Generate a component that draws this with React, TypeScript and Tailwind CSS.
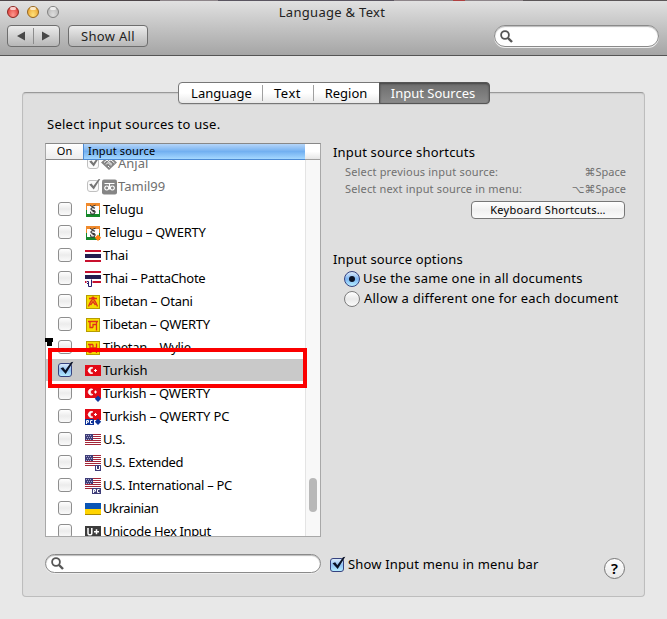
import type { FC, ReactNode } from "react";
import clsx from "clsx";

type IconName =
  | "anjal"
  | "tamil99"
  | "telugu"
  | "teluguQwerty"
  | "thai"
  | "thaiPatta"
  | "tibetanOtani"
  | "tibetanQwerty"
  | "tibetanWylie"
  | "turkish"
  | "turkishQwerty"
  | "turkishPc"
  | "us"
  | "usExtended"
  | "usPc"
  | "ukrainian"
  | "unicode";

type Source = {
  label: string;
  icon: IconName;
  tracking?: string;
  nested?: boolean;
  checked?: boolean;
};

const sources: Source[] = [
  { label: "Anjal", icon: "anjal", nested: true, checked: true },
  { label: "Tamil99", icon: "tamil99", nested: true, checked: true },
  { label: "Telugu", icon: "telugu", tracking: "tracking-[-0.1px]" },
  { label: "Telugu – QWERTY", icon: "teluguQwerty", tracking: "tracking-[-0.25px]" },
  { label: "Thai", icon: "thai", tracking: "tracking-[-0.2px]" },
  { label: "Thai – PattaChote", icon: "thaiPatta", tracking: "tracking-[-0.28px]" },
  { label: "Tibetan – Otani", icon: "tibetanOtani", tracking: "tracking-[-0.2px]" },
  { label: "Tibetan – QWERTY", icon: "tibetanQwerty", tracking: "tracking-[-0.28px]" },
  { label: "Tibetan – Wylie", icon: "tibetanWylie", tracking: "tracking-[-0.28px]" },
  { label: "Turkish", icon: "turkish", checked: true },
  { label: "Turkish – QWERTY", icon: "turkishQwerty", tracking: "tracking-[-0.18px]" },
  { label: "Turkish – QWERTY PC", icon: "turkishPc", tracking: "tracking-[-0.16px]" },
  { label: "U.S.", icon: "us", tracking: "tracking-[-0.25px]" },
  { label: "U.S. Extended", icon: "usExtended", tracking: "tracking-[-0.3px]" },
  { label: "U.S. International – PC", icon: "usPc", tracking: "tracking-[-0.3px]" },
  { label: "Ukrainian", icon: "ukrainian", tracking: "tracking-[-0.4px]" },
  { label: "Unicode Hex Input", icon: "unicode", tracking: "tracking-[-0.35px]" },
];

const UsFlag: FC<{ y: number }> = ({ y }) => (
  <g transform={`translate(0 ${y})`}>
    <rect width="16" height="11" fill="#fff" />
    {[0, 2, 4, 6, 8, 10].map((s) => (
      <rect key={s} y={s} width="16" height="1" fill="#a32638" />
    ))}
    <rect width="8" height="6" fill="#3f3d78" />
    {[0, 2, 4].map((r) =>
      [1, 3, 5].map((c) => (
        <rect key={`${r}-${c}`} x={r === 2 ? c + 1 : c} y={r + 1} width="1" height="1" fill="#a9a9cf" />
      )),
    )}
  </g>
);

const ThaiFlag: FC<{ y: number }> = ({ y }) => (
  <g transform={`translate(0 ${y})`}>
    <rect width="16" height="12" fill="#c8102e" />
    <rect y="2" width="16" height="8" fill="#fff" />
    <rect y="4" width="16" height="4" fill="#241d4f" />
  </g>
);

const TurkishFlag: FC<{ y: number; h: number }> = ({ y, h }) => (
  <g transform={`translate(0 ${y})`}>
    <rect width="16" height={h} fill="#e30a17" />
    <path
      d={`M8 ${h / 2 - 2.6}A3.1 3.1 0 1 0 8 ${h / 2 + 2.6}A2.5 2.5 0 1 1 8 ${h / 2 - 2.6}Z`}
      fill="#fff"
      stroke="#fff"
      strokeWidth=".7"
    />
    <path d={`M10.5 ${h / 2 - 1.6}v3.2M9 ${h / 2}h3`} stroke="#fff" strokeWidth="1.1" />
  </g>
);

const TeluguTile: FC = () => (
  <g>
    <rect x="1" y="1" width="14" height="7" fill="#f08a2c" />
    <rect x="1" y="8" width="14" height="7" fill="#15882a" />
    <rect x="2" y="4" width="12" height="8" fill="#fff" />
    <path d="M5 3.4l2 1.200 3.500-1.400" fill="none" stroke="#333" strokeWidth="1" />
    <path
      d="M10 6.200C8 5 5.500 6 6 7.500s3.500.3 4 1.900c.4 1.500-1 3-2.800 2.700-1.700-.2-2-1.600-1.200-2.400M7.500 9.600h1.800"
      fill="none"
      stroke="#333"
      strokeWidth="1.1"
    />
  </g>
);

const TibetanTile: FC<{ d: string }> = ({ d }) => (
  <g>
    <rect x="1.5" y="1.5" width="13" height="13" fill="#f5dc00" stroke="#b79d00" />
    <path d={d} fill="none" stroke="#e0301a" strokeWidth="1.3" />
  </g>
);

const Badge: FC<{ x: number; w: number; color: string; d: string }> = ({ x, w, color, d }) => (
  <g transform={`translate(${x} 10)`}>
    <rect width={w} height="6" fill={color} />
    <path d={d} fill="none" stroke="#fff" strokeWidth="1" />
  </g>
);

const PC_STROKES = "M1.500 5V1.500h2v1.700h-2M7.500 1.500h-2v3h2";

const iconDrawings: Record<IconName, ReactNode> = {
  anjal: (
    <g>
      <path d="M8 3.500L10.500 1.500 16 6.500 8 14 0 6.500 5.500 1.500Z" fill="#858585" />
      <path
        d="M3 6.500l3-2.500 5 4.500M5 8.500l2-2 3 3M8 4.500l2-.5 3.500 3M7 10l1.500 1.500"
        fill="none"
        stroke="#fff"
        strokeWidth="1"
      />
    </g>
  ),
  tamil99: (
    <g>
      <rect x="1" y="0.5" width="15" height="15" rx="2" fill="#858585" />
      <path
        d="M3.500 4.500h10M8.500 4.500v6M5.700 7a2 2 0 1 0 .1 0M11.300 7a2 2 0 1 0 .1 0"
        fill="none"
        stroke="#fff"
        strokeWidth="1.2"
      />
    </g>
  ),
  telugu: <TeluguTile />,
  teluguQwerty: (
    <g>
      <TeluguTile />
      <path d="M13 9.500l3.200 3.200-3.200 3.200-3.200-3.200z" fill="#ff7f11" />
    </g>
  ),
  thai: <ThaiFlag y={2} />,
  thaiPatta: (
    <g>
      <ThaiFlag y={0} />
      <rect x="1.5" y="10" width="6" height="6" fill="#fff" />
      <path d="M2 10.500h1.500v5h3V8.500M2 12.500h1.500" fill="none" stroke="#241d6f" strokeWidth="1" />
    </g>
  ),
  tibetanOtani: (
    <TibetanTile d="M4 4.500h2L8 3l2 1.500h2M8 3c0 3-1.500 3-2.800 5.500L3.500 12.500M8 3c0 3 1.500 3 2.800 5.500l1.700 4M5.500 11L8 7.500l2.500 3.500" />
  ),
  tibetanQwerty: <TibetanTile d="M3 4.500h10M11.500 4.500v9M5 5v5.500h3M8 10.500V7.500h3" />,
  tibetanWylie: <TibetanTile d="M3 4.500h5M11.500 3.500v9.500M5 4.500v3.500h6M4 9.500c2-1 3 0 3 1.500s-2 2-3.500 1M8 8V4.500" />,
  turkish: <TurkishFlag y={2} h={11} />,
  turkishQwerty: (
    <g>
      <TurkishFlag y={0} h={12} />
      <path d="M13 9.500l3.200 3.200-3.200 3.200-3.200-3.200z" fill="#1238a0" />
    </g>
  ),
  turkishPc: (
    <g>
      <TurkishFlag y={0} h={11} />
      <Badge x={0} w={9} color="#0c3196" d={PC_STROKES} />
      <path d="M13 9.500l3.200 3.200-3.200 3.200-3.200-3.200z" fill="#0c3196" />
    </g>
  ),
  us: <UsFlag y={2} />,
  usExtended: (
    <g>
      <UsFlag y={0} />
      <Badge x={10} w={6} color="#3f3d78" d="M1.500 1v3.500h3V1" />
    </g>
  ),
  usPc: (
    <g>
      <UsFlag y={0} />
      <Badge x={7} w={9} color="#3f3d78" d={PC_STROKES} />
    </g>
  ),
  ukrainian: (
    <g>
      <rect y="2" width="16" height="6" fill="#0b55b5" />
      <rect y="8" width="16" height="6" fill="#ffd400" />
      <path d="M0 13.500h16" stroke="#a88700" />
    </g>
  ),
  unicode: (
    <g>
      <rect y="2" width="16" height="12" fill="#3c3c3c" />
      <path
        d="M3 4v5.200q0 1.600 1.900 1.600T6.800 9.200V4M9 7.800h5M11.500 5.300v5"
        fill="none"
        stroke="#fff"
        strokeWidth="1.5"
      />
    </g>
  ),
};

const SourceIcon: FC<{ name: IconName }> = ({ name }) => (
  <svg viewBox="0 0 16 16" className="mt-1 size-4 shrink-0 overflow-visible">
    {iconDrawings[name]}
  </svg>
);

const Checkbox: FC<{ checked?: boolean }> = ({ checked }) => (
  <span
    className={clsx(
      "relative block size-3.5 shrink-0 rounded-[3px] border",
      checked
        ? "border-[#36427f] bg-linear-to-b from-[#dcebfa] via-[#8fc0f3] to-[#b5ecff]"
        : "border-[#8e8e8e] bg-linear-to-b from-white via-[#ececec] to-[#fafafa]",
    )}
  >
    {checked && (
      <svg viewBox="0 0 16 16" className="absolute -top-[3px] -left-px size-4">
        <path d="M2.500 7.300L5.200 6.200 7.300 9.200 13 1.200 15.300 .8 7.700 13Z" fill="#0a1226" />
      </svg>
    )}
  </span>
);

const DimCheckbox: FC = () => (
  <span className="relative mt-[5px] block size-3 shrink-0 rounded-[3px] border border-[#c0c0c0] bg-[#fafafa]">
    <svg viewBox="0 0 16 16" className="absolute -top-[3px] -left-px size-3.5">
      <path d="M2.500 7.300L5.200 6.200 7.300 9.200 13 1.500 15.200 1.200 7.700 13Z" fill="#757575" />
    </svg>
  </span>
);

const SourceRow: FC<{ source: Source }> = ({ source }) => {
  if (source.nested) {
    return (
      <li className="flex h-[23px] pl-[41px] text-[#6f6f6f]">
        <DimCheckbox />
        <span className="ml-0.5 flex gap-px">
          <SourceIcon name={source.icon} />
          <span className="leading-[22px]">{source.label}</span>
        </span>
      </li>
    );
  }
  return (
    <li className="h-[23px]">
      <div className={clsx("flex h-[22px]", source.checked && "bg-[#c9c9c9]")}>
        <div className="w-[39px] shrink-0 pt-1 pl-3">
          <Checkbox checked={source.checked} />
        </div>
        <div className="flex gap-0.5">
          <SourceIcon name={source.icon} />
          <span className={clsx("leading-[22px]", source.tracking)}>{source.label}</span>
        </div>
      </div>
    </li>
  );
};

const SearchField: FC<{ className?: string }> = ({ className }) => (
  <div
    className={clsx(
      "flex items-center rounded-full border border-[#8a8a8a] bg-white pl-[5px] shadow-[inset_0_1px_1px_#bbb,0_1px_0_#eee]",
      className,
    )}
  >
    <svg viewBox="0 0 13 13" className="size-[13px]" fill="none" stroke="#555">
      <circle cx="5" cy="5" r="3.9" strokeWidth="1.8" />
      <path d="M8 8l4 4" strokeWidth="2.4" />
    </svg>
  </div>
);

const TrafficLight: FC<{ className: string }> = ({ className }) => (
  <span className={clsx("relative block size-3 rounded-full border", className)}>
    <span className="absolute top-0 left-0.5 h-[3px] w-1.5 rounded-full bg-white/70" />
  </span>
);

const TitleBar: FC = () => (
  <header className="h-14 border-b border-[#555] bg-linear-to-b from-[#e2e2e2] to-[#a5a5a5]">
    <div className="flex h-px justify-between bg-[#8d8589]">
      <span className="w-40 bg-[#4d4548]" />
      <span className="w-44 bg-[#5a5560]" />
      <span className="w-3 bg-[#b04040]" />
      <span className="w-36 bg-[#5b5658]" />
    </div>
    <div className="relative flex h-6 gap-2 pt-[5px] pl-[7px]">
      <TrafficLight className="border-[#8b2520] bg-radial-[at_50%_80%] from-[#ff9a90] to-[#d92f2c]" />
      <TrafficLight className="border-[#96651c] bg-radial-[at_50%_80%] from-[#ffe27a] to-[#e79a26]" />
      <TrafficLight className="border-[#808080] bg-radial-[at_50%_80%] from-[#dedede] to-[#b2b2b2]" />
      <h1 className="absolute inset-x-0 top-0.5 pr-[3px] text-center text-[13px] leading-[18px] tracking-[0.3px] text-[#222]">
        Language &amp; Text
      </h1>
    </div>
    <div className="flex h-[22px] pr-2 pl-[7px]">
      <div className="flex w-[53px] items-center rounded-[4px] border border-[#6e6e6e] bg-linear-to-b from-[#ececec] to-[#b7b7b7]">
        <svg viewBox="0 0 51 20" className="h-5 w-[51px]">
          <path d="M17 5.500v9L9 10zM34 5.500v9l8-4.500z" fill="#484848" />
          <path d="M25.500 2v16" stroke="#8c8c8c" />
        </svg>
      </div>
      <button className="ml-2 w-20 rounded-[4px] border border-[#6e6e6e] bg-linear-to-b from-[#ececec] to-[#b7b7b7] text-[13px] leading-5 tracking-[0.3px] text-[#222]">
        Show All
      </button>
      <SearchField className="ml-auto w-[165px]" />
    </div>
  </header>
);

const Tabs: FC = () => (
  <nav className="relative mx-auto -mt-[11px] flex h-[22px] w-[312px] rounded-[4px] border border-[#777] bg-linear-to-b from-white from-50% to-[#e9e9e9] text-center leading-5 shadow-[0_1px_0_#ccc]">
    <span className="w-[83px] pl-[3px]">Language</span>
    <span className="my-0.5 w-px bg-[#a0a0a0]" />
    <span className="w-[50px] tracking-[0.5px]">Text</span>
    <span className="my-0.5 w-px bg-[#a0a0a0]" />
    <span className="w-[65px]">Region</span>
    <span className="-my-px -mr-px flex-1 rounded-r-[4px] border border-[#555] bg-linear-to-b from-[#6d6d6d] to-[#8a8a8a] pr-0.5 text-white shadow-[inset_0_1px_2px_#444]">
      Input Sources
    </span>
  </nav>
);

const SourceTable: FC = () => (
  <div className="relative">
    <div className="h-[394px] w-[276px] border border-[#a8a8a8] border-t-[#888] bg-white">
      <div className="flex h-4 text-[11px] leading-[14px]">
        <span className="w-[37px] border-b border-[#888] bg-linear-to-b from-white to-[#ececec] text-center">
          On
        </span>
        <span className="w-[222px] border-b border-l border-[#4c8ad3] bg-linear-to-b from-[#b5d5f8] via-[#72b0f1] to-[#a5d8ff] pl-1 tracking-[0.15px]">
          Input source
        </span>
        <span className="flex-1 border-b border-[#a0a0a0] bg-linear-to-b from-white from-50% to-[#e6e6e6]" />
      </div>
      <div className="flex h-[376px]">
        <ul className="h-full w-[259px] overflow-hidden text-[13px]">
          <li className="-mt-2" />
          {sources.map((source) => (
            <SourceRow key={source.label} source={source} />
          ))}
        </ul>
        <div className="flex flex-1 items-start justify-center border-l border-[#e4e4e4] bg-[#f8f8f8]">
          <span className="mt-[318px] h-[34px] w-2 rounded-full bg-[#b8b8b8]" />
        </div>
      </div>
    </div>
    {/* annotation marks over the selected row */}
    <div className="absolute top-[205px] left-[3px] h-10 w-[259px] border-4 border-[#fb0000]" />
    <div className="absolute top-[195px] left-0 h-1 w-2 bg-black" />
    <div className="absolute top-[199px] left-0.5 h-1 w-[5px] bg-black" />
  </div>
);

const Radio: FC<{ on?: boolean; label: string; className?: string }> = ({ on, label, className }) => (
  <label className="flex h-5 items-center">
    <span
      className={clsx(
        "flex size-4 shrink-0 items-center justify-center rounded-full border",
        on
          ? "border-[#36427f] bg-linear-to-b from-[#dcebfa] via-[#7db5f2] to-[#b5ecff]"
          : "border-[#7d7d7d] bg-linear-to-b from-white via-[#e9e9e9] to-[#fafafa]",
      )}
    >
      {on && <span className="size-1.5 rounded-full bg-[#0a1226]" />}
    </span>
    <span className={clsx("whitespace-nowrap", className)}>{label}</span>
  </label>
);

const Options: FC = () => (
  <section className="ml-3 w-[293px]">
    <h2 className="leading-[18px] tracking-[0.18px]">Input source shortcuts</h2>
    <div className="mt-0.5 pl-3 text-[11px] leading-[17px] text-[#707070]">
      <p className="flex justify-between">
        <span className="tracking-[0.18px]">Select previous input source:</span>
        <span>⌘Space</span>
      </p>
      <p className="flex justify-between">
        <span className="tracking-[0.16px]">Select next input source in menu:</span>
        <span>⌥⌘Space</span>
      </p>
    </div>
    <button className="mt-1 mr-px ml-auto block h-[18px] w-[154px] rounded-[4px] border border-[#777] bg-linear-to-b from-white via-[#f0f0f0] to-[#fafafa] text-[11px] leading-4 tracking-[0.3px]">
      Keyboard Shortcuts…
    </button>
    <h2 className="mt-[31px] leading-[18px] tracking-[0.15px]">Input source options</h2>
    <div className="pt-px pl-[11px]">
      <Radio on label="Use the same one in all documents" className="ml-[3px] tracking-[0.18px]" />
      <Radio label="Allow a different one for each document" className="ml-1 tracking-[0.23px]" />
    </div>
  </section>
);

export default function App() {
  return (
    <div className="flex h-[619px] w-[667px] flex-col overflow-hidden bg-[#e8e8e8] font-['Noto_Sans','DejaVu_Sans',sans-serif] text-[13px] text-black">
      <TitleBar />
      <main className="mx-[22px] mt-[36px] h-[505px] rounded-[4px] border border-[#bdbdbd] border-t-[#999] bg-[#dfdfdf] shadow-[inset_0_1px_1px_#ccc]">
        <Tabs />
        <div className="pl-[22px]">
          <p className="mt-[11px] ml-0.5 leading-[18px] tracking-[0.25px]">Select input sources to use.</p>
          <div className="mt-[10px] flex">
            <SourceTable />
            <Options />
          </div>
          <div className="mt-[17px] flex">
            <SearchField className="h-[19px] w-[276px]" />
            <label className="ml-[9px] flex h-[22px] items-center gap-1">
              <Checkbox checked />
              <span className="tracking-[0.16px]">Show Input menu in menu bar</span>
            </label>
            <button className="mt-1 ml-auto mr-[19px] size-[21px] rounded-full border border-[#777] bg-linear-to-b from-white to-[#e8e8e8] text-[15px] leading-[19px] font-semibold">
              ?
            </button>
          </div>
        </div>
      </main>
    </div>
  );
}
